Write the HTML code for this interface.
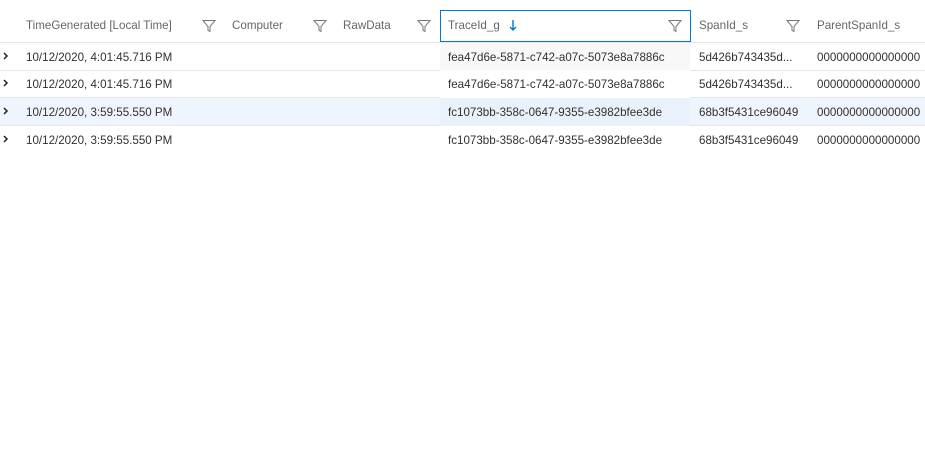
<!DOCTYPE html>
<html><head><style>
body{margin:0;width:925px;height:460px;background:#fff;font-family:"Liberation Sans",sans-serif;font-size:11.6px;position:relative;overflow:hidden}
.a{position:absolute;white-space:nowrap}
.h{color:#666;top:19px}
.row{position:absolute;left:0;width:925px;height:28px;border-bottom:1px solid #e6e6e6}
.c{position:absolute;top:8px;color:#323130}
.tr{position:absolute;left:440px;width:250px;top:0;height:28px;background:#f8f8f8}
.chev{position:absolute;left:1px;top:8px;width:10px;height:10px}
svg.f{position:absolute;top:19px}
</style></head><body>
<div class="a h" style="left:26px">TimeGenerated [Local Time]</div>
<div class="a h" style="left:232px">Computer</div>
<div class="a h" style="left:343px">RawData</div>
<div class="a h" style="left:448px">TraceId_g</div>
<div class="a h" style="left:699px">SpanId_s</div>
<div class="a h" style="left:817px">ParentSpanId_s</div>
<svg class="f" style="left:202px" width="14" height="14" viewBox="0 0 14 14"><path d="M1 1.5H13L8 7.5V12.5L6 11.5V7.5Z" fill="none" stroke="#777" stroke-width="1"/></svg>
<svg class="f" style="left:313px" width="14" height="14" viewBox="0 0 14 14"><path d="M1 1.5H13L8 7.5V12.5L6 11.5V7.5Z" fill="none" stroke="#777" stroke-width="1"/></svg>
<svg class="f" style="left:417px" width="14" height="14" viewBox="0 0 14 14"><path d="M1 1.5H13L8 7.5V12.5L6 11.5V7.5Z" fill="none" stroke="#777" stroke-width="1"/></svg>
<svg class="f" style="left:668px" width="14" height="14" viewBox="0 0 14 14"><path d="M1 1.5H13L8 7.5V12.5L6 11.5V7.5Z" fill="none" stroke="#777" stroke-width="1"/></svg>
<svg class="f" style="left:786px" width="14" height="14" viewBox="0 0 14 14"><path d="M1 1.5H13L8 7.5V12.5L6 11.5V7.5Z" fill="none" stroke="#777" stroke-width="1"/></svg>
<svg style="position:absolute;left:509px;top:19px" width="8" height="13" viewBox="0 0 8 13"><path d="M4 1V11M1 8L4 11L7 8" fill="none" stroke="#0078d4" stroke-width="1.4"/></svg>
<div style="position:absolute;left:440px;top:10px;width:249px;height:30px;border:1px solid #0078d4"></div>
<div class="row" style="top:42px;border-top:1px solid #e6e6e6;height:27px"><div class="tr"></div>
<svg class="chev" viewBox="0 0 10 10"><path d="M3 2L6 5L3 8" fill="none" stroke="#222" stroke-width="1.5"/></svg>
<div class="c" style="left:26px">10/12/2020, 4:01:45.716 PM</div><div class="c" style="left:448px">fea47d6e-5871-c742-a07c-5073e8a7886c</div><div class="c" style="left:699px">5d426b743435d...</div><div class="c" style="left:817px">0000000000000000</div></div>
<div class="row" style="top:70px;height:27px"><div class="tr" style="background:#fff"></div>
<svg class="chev" viewBox="0 0 10 10"><path d="M3 2L6 5L3 8" fill="none" stroke="#222" stroke-width="1.5"/></svg>
<div class="c" style="left:26px">10/12/2020, 4:01:45.716 PM</div><div class="c" style="left:448px">fea47d6e-5871-c742-a07c-5073e8a7886c</div><div class="c" style="left:699px">5d426b743435d...</div><div class="c" style="left:817px">0000000000000000</div></div>
<div class="row" style="top:98px;height:27px;background:#eef5fc"><div class="tr" style="background:#e9f1fa"></div>
<svg class="chev" viewBox="0 0 10 10"><path d="M3 2L6 5L3 8" fill="none" stroke="#222" stroke-width="1.5"/></svg>
<div class="c" style="left:26px">10/12/2020, 3:59:55.550 PM</div><div class="c" style="left:448px">fc1073bb-358c-0647-9355-e3982bfee3de</div><div class="c" style="left:699px">68b3f5431ce96049</div><div class="c" style="left:817px">0000000000000000</div></div>
<div class="row" style="top:126px;height:27px;border-bottom:none">
<svg class="chev" viewBox="0 0 10 10"><path d="M3 2L6 5L3 8" fill="none" stroke="#222" stroke-width="1.5"/></svg>
<div class="c" style="left:26px">10/12/2020, 3:59:55.550 PM</div><div class="c" style="left:448px">fc1073bb-358c-0647-9355-e3982bfee3de</div><div class="c" style="left:699px">68b3f5431ce96049</div><div class="c" style="left:817px">0000000000000000</div></div>
</body></html>
